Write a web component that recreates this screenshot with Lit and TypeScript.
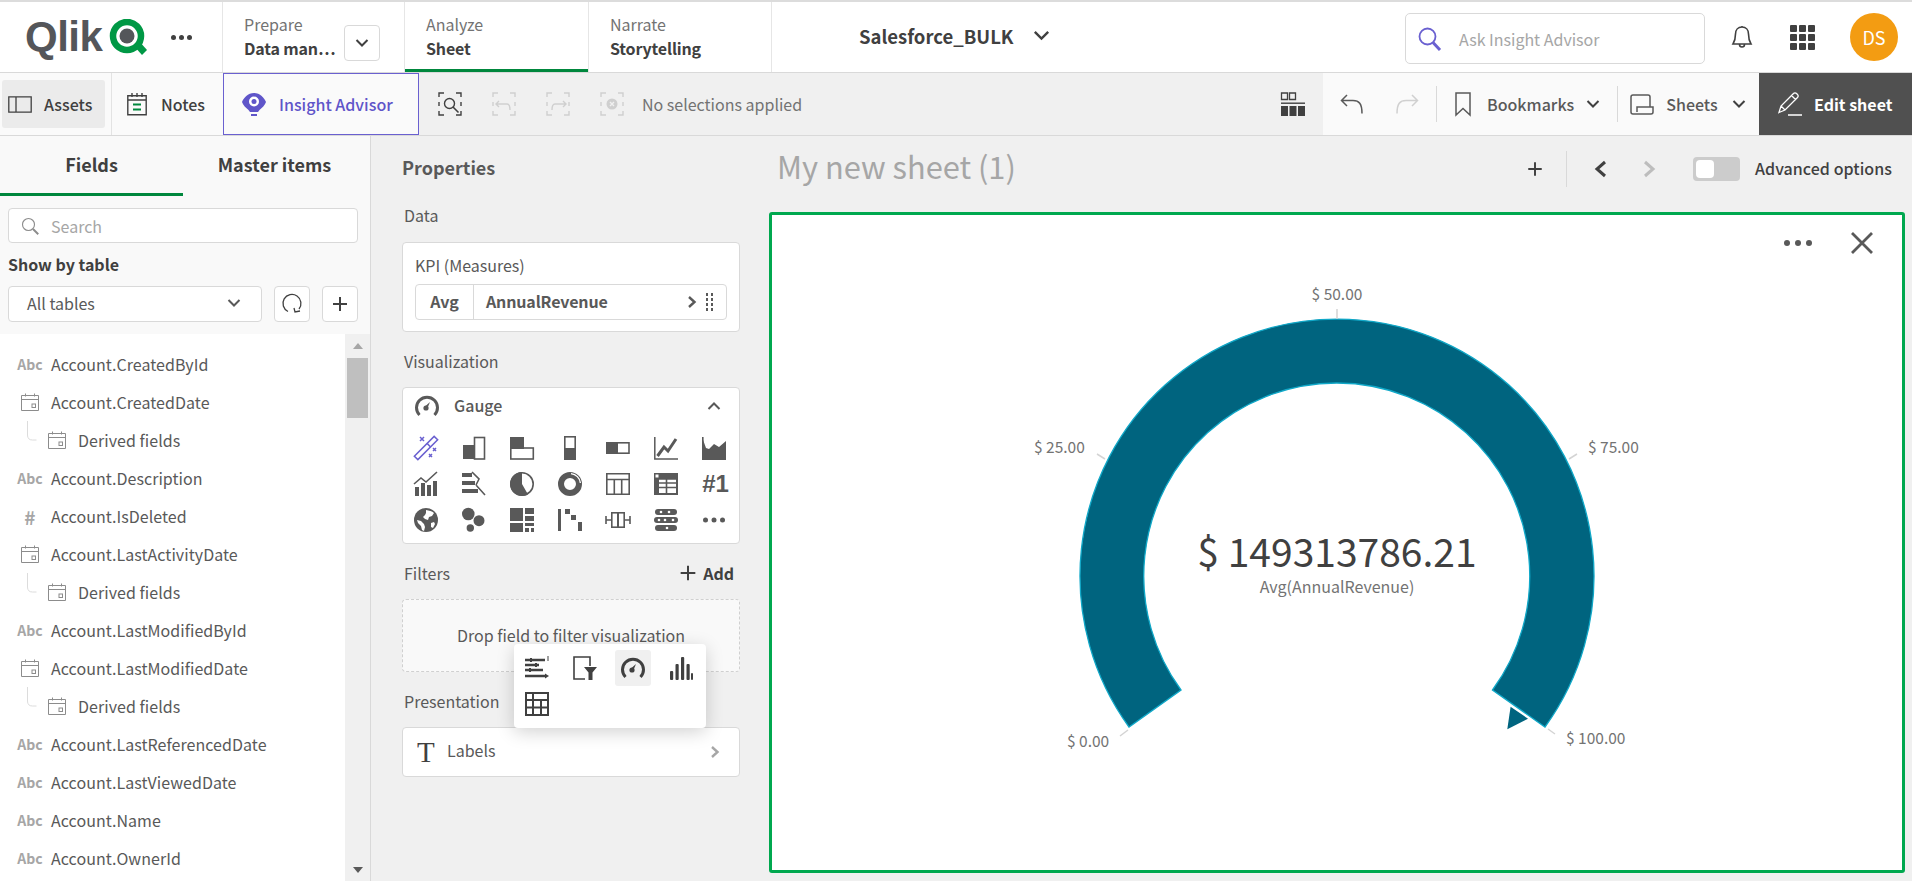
import { LitElement, html, svg, css } from "lit";
import { customElement } from "lit/decorators.js";

const box = (body: unknown, cls = "") =>
  html`<svg class="i ${cls}" viewBox="0 0 24 24" fill="currentColor">${body}</svg>`;

const chevDown = html`<svg class="chev" viewBox="0 0 14 14" fill="none" stroke="currentColor" stroke-width="2"><path d="M1.5 4l5.5 5.5L12.5 4"/></svg>`;

const calendar = html`<svg class="cal" viewBox="0 0 18 18" fill="none" stroke="currentColor" stroke-width="1"><path d="M.5 2.5h17v15H.5zM.5 6.5h17M4.5 .5v3M13.5 .5v3"/><rect x="11" y="11" width="3.5" height="3.5"/></svg>`;

const gaugeIcon = box(svg`<path d="M4.5 21A10.5 10.5 0 1 1 19.5 21" fill="none" stroke="currentColor" stroke-width="3"/><circle cx="11" cy="14" r="2.6"/><path d="M10 12.5l5-4.5 -2.5 6z"/>`);

const dashFrame = (inner: unknown) => box(svg`<path d="M1 5V1h5M18 1h5v4M23 10v4M23 19v4h-5M6 23H1v-4M1 14v-4" fill="none" stroke="currentColor" stroke-width="1.4"/>${inner}`);

const vizIcons = [
  box(svg`<g fill="none" stroke="#6a60d0" stroke-width="1.5"><g transform="rotate(-45 12 12)"><rect x="-2" y="9.5" width="28" height="5"/><path d="M16 9.5v5"/></g><path d="M6 1l4 4M10 1L6 5M19 12l3 3M22 12l-3 3M15 18l3 3M18 18l-3 3"/></g>`),
  box(svg`<rect x="1" y="9" width="12" height="14"/><rect x="12.5" y="1.5" width="10" height="21.5" fill="none" stroke="currentColor" stroke-width="1.6"/>`),
  box(svg`<rect x="0" y="1" width="14" height="12"/><rect x=".8" y="12" width="22.5" height="11" fill="none" stroke="currentColor" stroke-width="1.6"/>`),
  box(svg`<rect x="6" y="12" width="12" height="12"/><rect x="6.8" y=".8" width="10.4" height="12" fill="none" stroke="currentColor" stroke-width="1.6"/>`),
  box(svg`<rect x="0" y="6" width="12" height="12"/><rect x="11" y="6.8" width="12" height="10.4" fill="none" stroke="currentColor" stroke-width="1.6"/>`),
  box(svg`<path d="M.8 1v22H24" fill="none" stroke="currentColor" stroke-width="1.5"/><path d="M3.5 20L10 11l4 4 8-12" fill="none" stroke="currentColor" stroke-width="3"/>`),
  box(svg`<path d="M0 1v23h24V5l-7 6-5-3-5 5-3-1z"/><path d="M.8 1v22" stroke="currentColor" stroke-width="1.600"/>`),
  box(svg`<rect x="1" y="15" width="4" height="9"/><rect x="7" y="11" width="4" height="13"/><rect x="13" y="13" width="4" height="11"/><rect x="19" y="9" width="4" height="15"/><path d="M0 12l7-6 5 4 11-10" fill="none" stroke="currentColor" stroke-width="1.6"/>`),
  box(svg`<rect x="0" y="1" width="10" height="4"/><rect x="0" y="9" width="13" height="4"/><rect x="0" y="17" width="16" height="4"/><path d="M10 0l7 7-3 6M14 13l9 10" fill="none" stroke="currentColor" stroke-width="1.6"/>`),
  box(svg`<path d="M12 0v12l6 10.4A12 12 0 1 1 12 0z"/><circle cx="12" cy="12" r="11.2" fill="none" stroke="currentColor" stroke-width="1.6"/>`),
  box(svg`<circle cx="12" cy="12" r="9" fill="none" stroke="currentColor" stroke-width="6"/><path d="M13 1.6A10.5 10.5 0 0 1 22.4 11" fill="none" stroke="#fff" stroke-width="1.4"/>`),
  box(svg`<path d="M.8 1.8h22.4v20.4H.8zM.8 7.5h22.4M8.3 7.5v14.7M15.7 7.5v14.7" fill="none" stroke="currentColor" stroke-width="1.6"/>`),
  box(svg`<rect x="0" y="1" width="24" height="22"/><path d="M5 7h17v14H5z" fill="#fff"/><rect x="1.5" y="2.5" width="3" height="3" fill="#fff"/><path d="M5 11h17M5 15.500h17M12.500 7v14M5 7h17" stroke="currentColor" stroke-width="1.6"/>`),
  null,
  box(svg`<circle cx="12" cy="12" r="12"/><path d="M12 2c3 .5 6 1 8 3l-2 3-3 1-1 3-3-1-2-2 2-2 1-2zM3 12l4 1 3 3 1 3-1 4-2-1-1-4-3-3zM17 15l3-1 1 2-2 4-2-1z" fill="#fff"/>`),
  box(svg`<circle cx="6.300" cy="6" r="6.300"/><circle cx="17" cy="12.700" r="5.500"/><circle cx="8.300" cy="20" r="3.700"/>`),
  box(svg`<rect x="0" y="0" width="13" height="13"/><rect x="15" y="0" width="9" height="6"/><rect x="15" y="8" width="9" height="5"/><rect x="0" y="15" width="13" height="9"/><rect x="15" y="15" width="9" height="3"/><rect x="15" y="20" width="4" height="4"/><rect x="21" y="20" width="3" height="4"/>`),
  box(svg`<rect x="0" y="1" width="3" height="22"/><rect x="7" y="1" width="5" height="5"/><rect x="13" y="7" width="5" height="5"/><rect x="20" y="14" width="4" height="9"/>`),
  box(svg`<path d="M0 8v8M24 8v8M0 12h5M19 12h5" fill="none" stroke="currentColor" stroke-width="1.6"/><rect x="5.800" y="4.800" width="12.400" height="14.400" fill="none" stroke="currentColor" stroke-width="1.6"/><rect x="11" y="5" width="2" height="14"/>`),
  box(svg`<rect x="1" y="1" width="22" height="6" rx="3"/><rect x="0" y="9" width="24" height="6" rx="3"/><rect x="1" y="17" width="22" height="6" rx="3"/><g fill="#fff"><circle cx="7" cy="4" r="1.300"/><circle cx="15" cy="4" r="1.300"/><circle cx="5" cy="12" r="1.300"/><circle cx="11" cy="12" r="1.300"/><circle cx="19" cy="12" r="1.300"/><circle cx="13" cy="20" r="1.300"/></g>`),
  box(svg`<circle cx="3.500" cy="12" r="2.500"/><circle cx="12" cy="12" r="2.500"/><circle cx="20.500" cy="12" r="2.500"/>`),
];

const popupIcons = [
  box(svg`<g fill="none" stroke="currentColor" stroke-width="2.400"><path d="M0 4h20M0 9h14M0 14h18M0 20h20"/><path d="M6 2v4M11 7v4M5 12v4" stroke-width="2"/><path d="M23 0v5" stroke-width="1"/></g><path d="M20 17.500l4 2.500-4 2.500z"/>`),
  box(svg`<path d="M12 23H1V1h16v9" fill="none" stroke="currentColor" stroke-width="1.600"/><path d="M11 11h13l-4.500 5.500V24h-4v-7.500z"/>`),
  gaugeIcon,
  box(svg`<rect x="1" y="15" width="3.200" height="9" rx="1"/><rect x="6.500" y="8" width="3.200" height="16" rx="1"/><rect x="12" y="1" width="3.200" height="23" rx="1"/><rect x="17.500" y="8" width="3.200" height="16" rx="1"/><rect x="22" y="17" width="2" height="7" rx="1"/>`),
  box(svg`<path d="M1 1h22v22H1zM1 8h22M1 15.500h22M8 1v22M16 8v15" fill="none" stroke="currentColor" stroke-width="2"/>`),
];

type Field = { name: string; type: "abc" | "date" | "num" | "derived" };
const fields: Field[] = [
  { name: "Account.CreatedById", type: "abc" },
  { name: "Account.CreatedDate", type: "date" },
  { name: "Derived fields", type: "derived" },
  { name: "Account.Description", type: "abc" },
  { name: "Account.IsDeleted", type: "num" },
  { name: "Account.LastActivityDate", type: "date" },
  { name: "Derived fields", type: "derived" },
  { name: "Account.LastModifiedById", type: "abc" },
  { name: "Account.LastModifiedDate", type: "date" },
  { name: "Derived fields", type: "derived" },
  { name: "Account.LastReferencedDate", type: "abc" },
  { name: "Account.LastViewedDate", type: "abc" },
  { name: "Account.Name", type: "abc" },
  { name: "Account.OwnerId", type: "abc" },
];

@customElement("app-root")
export class AppRoot extends LitElement {
  static styles = css`
    :host {
      display: flex;
      flex-direction: column;
      height: 881px;
      width: 1912px;
      overflow: hidden;
      background: #f0f0f0;
      color: #404040;
      font-family: "Noto Sans CJK JP", "Noto Sans", sans-serif;
      font-size: 16px;
      border-top: 2px solid #dcdcdc;
      box-sizing: border-box;
    }
    * { box-sizing: border-box; }
    .i { width: 24px; height: 24px; display: block; flex: none; overflow: visible; }
    .chev { width: 14px; height: 14px; display: block; flex: none; }
    .cal { width: 18px; height: 18px; display: block; flex: none; color: #8c8c8c; }
    .b { font-weight: 700; }

    /* top bar */
    .header { height: 71px; background: #fff; border-bottom: 1px solid #d9d9d9; display: flex; flex: none; }
    .logo { width: 223px; border-right: 1px solid #e6e6e6; display: flex; align-items: center; padding-left: 25px; }
    .qlik { font-family: "Liberation Sans", sans-serif; font-weight: 700; font-size: 42px; letter-spacing: -.5px; color: #54565a; line-height: 1; }
    .qmark { width: 38px; height: 36px; margin-left: 7px; flex: none; }
    .more { display: flex; gap: 3px; margin-left: 24px; }
    .more span { width: 5px; height: 5px; border-radius: 50%; background: #404040; }
    .tab { width: 183px; padding: 10px 0 0 21px; border-right: 1px solid #e6e6e6; position: relative; line-height: 24px; flex: none; }
    .tab small { display: block; font-size: 16px; color: #737373; font-weight: 400; }
    .tab .b { color: #404040; font-weight: 700; letter-spacing: -.15px; }
    .tab.prep { display: flex; gap: 10px; width: 182px; }
    .tab.prep .txt { width: 90px; white-space: nowrap; }
    .ddbtn { width: 36px; height: 36px; margin-top: 13px; border: 1px solid #d9d9d9; border-radius: 4px; display: flex; align-items: center; justify-content: center; }
    .tab.on { box-shadow: inset 0 -3px 0 #00873d; }
    .appname { margin-left: 87px; display: flex; align-items: center; gap: 19px; font-size: 18.500px; font-weight: 700; padding-bottom: 3px; }
    .appname .chev { width: 17px; height: 17px; }
    .right { margin-left: auto; display: flex; align-items: center; padding: 0 14px 0 0; }
    .ask { width: 300px; height: 51px; border: 1px solid #d9d9d9; border-radius: 5px; display: flex; align-items: center; padding-left: 12px; gap: 17px; color: #a6a6a6; margin-right: 25px; margin-top: 3px; }
    .ask .i { color: #6a60d0; }
    .grid9 { display: grid; grid-template-columns: repeat(3, 7px); gap: 2px; margin: 0 35px 0 36px; }
    .grid9 span { height: 7px; background: #404040; border-radius: 1px; }
    .avatar { width: 48px; height: 48px; border-radius: 50%; background: #f39c12; color: #fff; display: flex; align-items: center; justify-content: center; font-size: 18px; }

    /* tool bar */
    .toolbar { height: 63px; flex: none; display: flex; border-bottom: 1px solid #d9d9d9; align-items: stretch; }
    .tl { background: #fafafa; display: flex; align-items: center; }
    .assets { width: 112px; border-right: 1px solid #e3e3e3; padding-left: 2px; }
    .assets .inner { width: 103px; height: 48px; background: #ebebeb; border-radius: 3px; display: flex; align-items: center; gap: 12px; padding-left: 6px; font-weight: 500; }
    .notes { width: 111px; padding-left: 13px; gap: 12px; font-weight: 500; }
    .insight { width: 196px; border: 1px solid #6a60d0; border-bottom-width: 1px; color: #5f55c9; padding-left: 18px; gap: 13px; font-weight: 500; }
    .sel { flex: 1; display: flex; align-items: center; padding-left: 19px; gap: 30px; color: #cfcfcf; }
    .sel .dark { color: #404040; }
    .sel span { color: #737373; margin-left: -12px; }
    .layout { width: 60px; display: flex; align-items: center; padding-left: 18px; }
    .tr { width: 436px; background: #fafafa; display: flex; align-items: center; padding-left: 17px; flex: none; }
    .sep { width: 1px; height: 36px; background: #d9d9d9; flex: none; }
    .tr .m { font-weight: 500; color: #595959; }
    .edit { width: 153px; background: #505050; color: #fff; display: flex; align-items: center; padding-left: 19px; gap: 12px; font-weight: 700; flex: none; }

    /* body */
    .body { flex: 1; display: flex; min-height: 0; }

    /* assets panel */
    .panel { width: 371px; flex: none; display: flex; flex-direction: column; border-right: 1px solid #d9d9d9; background: #fff; }
    .ptop { background: #f9f9f9; height: 198px; flex: none; padding: 0 12px 0 8px; }
    .ptabs { display: flex; height: 60px; margin: 0 -12px 0 -8px; font-size: 18px; font-weight: 700; color: #404040; }
    .ptabs div { width: 183px; text-align: center; padding-top: 13px; line-height: 30px; }
    .ptabs div.on { border-bottom: 3px solid #00873d; }
    .ptabs div + div { width: 187px; padding-right: 4px; }
    .psearch { height: 35px; margin-top: 12px; background: #fff; border: 1px solid #d9d9d9; border-radius: 4px; display: flex; align-items: center; padding-left: 12px; gap: 12px; color: #a6a6a6; }
    .psearch .i { width: 18px; height: 18px; color: #8c8c8c; }
    .showby { height: 43px; display: flex; align-items: center; font-weight: 700; color: #404040; padding-bottom: 2px; }
    .selrow { display: flex; gap: 12px; }
    .select, .sq { height: 36px; background: #fff; border: 1px solid #d9d9d9; border-radius: 4px; display: flex; align-items: center; }
    .select { width: 254px; padding: 0 20px 2px 18px; justify-content: space-between; color: #595959; }
    .sq { width: 36px; justify-content: center; }
    .listwrap { flex: 1; display: flex; min-height: 0; }
    .list { flex: 1; padding-top: 11px; overflow: hidden; color: #595959; letter-spacing: .05px; }
    .row { height: 38px; display: flex; align-items: center; padding-left: 18px; white-space: nowrap; }
    .ficon { width: 24px; margin-right: 9px; display: flex; justify-content: center; color: #a6a6a6; font-weight: 700; font-size: 14px; flex: none; line-height: 1; }
    .ficon.hash { font-size: 19px; }
    .row.derived { padding-left: 27px; }
    .conn { width: 21px; height: 38px; flex: none; }
    .row.derived .cal { margin-right: 12px; }
    .scroll { width: 25px; background: #f0f0f0; display: flex; flex-direction: column; align-items: center; flex: none; padding: 9px 0 8px; }
    .tri-u { width: 0; height: 0; border: 5.500px solid transparent; border-top: 0; border-bottom: 6px solid #a6a6a6; }
    .tri-d { width: 0; height: 0; border: 5.500px solid transparent; border-bottom: 0; border-top: 6px solid #595959; margin-top: auto; }
    .thumb { width: 21px; height: 60px; margin-top: 9px; background: #bfbfbf; }

    /* properties */
    .props { width: 398px; flex: none; padding: 0 29px 0 31px; position: relative; color: #595959; }
    .ptitle { height: 64px; display: flex; align-items: center; font-size: 18px; font-weight: 700; padding-bottom: 2px; }
    .lab { display: flex; align-items: center; justify-content: space-between; padding: 3px 2px 0; height: 55px; }
    .lab.first { height: 32px; padding-top: 0; padding-bottom: 2px; margin-bottom: 10px; }
    .add { display: flex; align-items: center; gap: 7px; font-weight: 700; color: #404040; padding-right: 4px; }
    .add .i { width: 16px; height: 16px; }
    .card { background: #fff; border: 1px solid #d9d9d9; border-radius: 4px; }
    .kpi { height: 90px; padding: 10px 12px 0; }
    .kpi p { margin: 0 0 7px; line-height: 24px; }
    .meas { height: 36px; border: 1px solid #d9d9d9; border-radius: 4px; display: flex; align-items: center; font-weight: 700; letter-spacing: -.15px; }
    .meas .avg { width: 58px; height: 100%; border-right: 1px solid #d9d9d9; display: flex; align-items: center; justify-content: center; padding-bottom: 2px; }
    .meas .nm { flex: 1; padding: 0 0 2px 12px; }
    .grip { display: grid; grid-template-columns: repeat(2, 2.500px); gap: 2.500px; margin: 0 13px 0 9px; }
    .grip span { height: 2.500px; background: #595959; }
    .viz { height: 157px; }
    .vizh { height: 42px; display: flex; align-items: center; padding: 0 18px 0 12px; font-weight: 500; }
    .vizh .name { margin-left: 15px; flex: 1; padding-bottom: 8px; }
    .vizh .i { margin-top: -6px; }
    .vizh .chev { margin-top: -6px; }
    .vgrid { display: grid; grid-template-columns: repeat(7, 48px); grid-auto-rows: 36px; margin-left: -1px; color: #595959; }
    .vgrid > div { display: flex; align-items: center; justify-content: center; }
    .kpiglyph { font-size: 24px; font-weight: 700; font-family: "Liberation Sans", sans-serif; margin-left: 3px; }
    .drop { height: 73px; border: 1px dashed #d0d0d0; border-radius: 4px; background: #f9f9f9; display: flex; align-items: center; justify-content: center; padding-bottom: 2px; }
    .labels { height: 50px; display: flex; align-items: center; padding: 0 17px 0 14px; }
    .tee { font-family: "Liberation Serif", serif; font-size: 29px; line-height: 1; width: 19px; margin-right: 11px; color: #404040; }
    .labels > span:nth-child(2) { padding-bottom: 5px; }
    .labels .chev { margin-left: auto; color: #a6a6a6; }
    .popup { position: absolute; left: 143px; top: 508px; width: 192px; height: 84px; background: #fff; border-radius: 4px; box-shadow: 0 4px 18px rgba(0, 0, 0, .18); padding: 6px 5px; display: grid; grid-template-columns: repeat(4, 36px); grid-auto-rows: 36px; column-gap: 12px; color: #404040; }
    .popup div { display: flex; align-items: center; justify-content: center; border-radius: 3px; }
    .popup .on { background: #f0f0f0; }

    /* sheet */
    .main { flex: 1; min-width: 0; display: flex; flex-direction: column; padding: 0 7px 8px 0; }
    .shead { height: 76px; flex: none; display: flex; align-items: center; padding: 0 13px 10px 10px; }
    .stitle { font-size: 30.800px; color: #a6a6a6; flex: 1; padding-bottom: 7px; margin-left: -2px; }
    .shead .i { width: 18px; height: 18px; }
    .shead .sep { margin: 0 27px 0 22px; }
    .toggle { width: 47px; height: 24px; background: #cccccc; border-radius: 4px; padding: 3px; margin: 0 15px 0 37px; }
    .toggle span { display: block; width: 18px; height: 18px; background: #fff; border-radius: 4px; }
    .adv { font-weight: 500; color: #404040; padding-bottom: 2px; letter-spacing: .05px; }
    .frame { flex: 1; min-height: 0; background: #fff; border: 3px solid #00a84f; border-radius: 3px; position: relative; }
    .frame svg.g { width: 100%; height: 100%; display: block; }
    .g text { font-family: "Noto Sans CJK JP", sans-serif; }
    .fact { position: absolute; top: 16px; right: 28px; display: flex; align-items: center; gap: 38px; color: #595959; }
    .fact .more { margin: 0; gap: 5px; }
    .fact .more span { background: #595959; width: 6px; height: 6px; }
    .kval { position: absolute; left: 0; right: 0; top: 315px; text-align: center; display: flex; flex-direction: column; gap: 6px; pointer-events: none; }
    .kval .v { font-size: 39px; line-height: 40px; color: #404040; }
    .kval .s { line-height: 20px; color: #737373; }
  `;

  private renderField(f: Field) {
    if (f.type === "derived") {
      return html`<div class="row derived">
        <svg class="conn" viewBox="0 0 21 38" fill="none" stroke="#dcdcdc"><path d="M.5 0v14q0 5 5 5h4"/></svg>
        ${calendar}<span>${f.name}</span>
      </div>`;
    }
    const icon =
      f.type === "abc" ? html`<div class="ficon">Abc</div>`
      : f.type === "num" ? html`<div class="ficon hash">#</div>`
      : html`<div class="ficon">${calendar}</div>`;
    return html`<div class="row">${icon}<span>${f.name}</span></div>`;
  }

  render() {
    return html`
      <div class="header">
        <div class="logo">
          <span class="qlik">Qlik</span>
          <svg class="qmark" viewBox="0 0 38 36"><circle cx="18" cy="17" r="14" fill="none" stroke="#009845" stroke-width="6.500"/><circle cx="18" cy="17" r="7.500" fill="#54565a"/><path d="M25 27l5-5 8 9-5 5z" fill="#009845"/></svg>
          <div class="more"><span></span><span></span><span></span></div>
        </div>
        <div class="tab prep">
          <div class="txt"><small>Prepare</small><div class="b">Data man…</div></div>
          <div class="ddbtn">${chevDown}</div>
        </div>
        <div class="tab on" style="width:184px"><small>Analyze</small><div class="b">Sheet</div></div>
        <div class="tab"><small>Narrate</small><div class="b">Storytelling</div></div>
        <div class="appname"><span>Salesforce_BULK</span>${chevDown}</div>
        <div class="right">
          <div class="ask">
            ${box(svg`<circle cx="9.500" cy="9.500" r="8" fill="none" stroke="currentColor" stroke-width="1.800"/><path d="M15 15.500l7 7.500" stroke="currentColor" stroke-width="3" fill="none"/>`)}
            <span>Ask Insight Advisor</span>
          </div>
          ${box(svg`<path d="M12 2c-4 0-6.500 3-6.500 7 0 5-1 7.500-2.500 10h18c-1.500-2.500-2.500-5-2.500-10 0-4-2.500-7-6.500-7zM12 1v1M9.500 19.500a2.500 2.500 0 0 0 5 0" fill="none" stroke="currentColor" stroke-width="1.600"/>`)}
          <div class="grid9">${[...Array(9)].map(() => html`<span></span>`)}</div>
          <div class="avatar">DS</div>
        </div>
      </div>

      <div class="toolbar">
        <div class="tl assets">
          <div class="inner">
            ${box(svg`<path d="M.8 4.800h22.400v15.400H.8zM8 4.800v15.400" fill="none" stroke="currentColor" stroke-width="1.300"/>`)}
            <span>Assets</span>
          </div>
        </div>
        <div class="tl notes">
          ${box(svg`<path d="M2.800 3.800h18.400v19H2.800zM2.800 8h18.400M7 1v4M12 1v4M17 1v4" fill="none" stroke="currentColor" stroke-width="1.400"/><path d="M8 12.500h8M8 17.500h8" stroke="#00873d" stroke-width="1.800"/>`)}
          <span>Notes</span>
        </div>
        <div class="tl insight">
          ${box(svg`<path d="M12 1C6 1 1.500 6 0 10c1 3 4 6 6.500 8L8 20h8l1.500-2C20 16 23 13 24 10 22.500 6 18 1 12 1z"/><circle cx="12" cy="9.500" r="5" fill="#fff"/><circle cx="12" cy="9.500" r="2.500"/><rect x="9" y="22" width="6" height="2"/>`)}
          <span>Insight Advisor</span>
        </div>
        <div class="sel">
          <div class="dark">${dashFrame(svg`<circle cx="11.500" cy="11.500" r="5" fill="none" stroke="currentColor" stroke-width="1.400"/><path d="M15 15l5.500 5.500" stroke="currentColor" stroke-width="1.600"/>`)}</div>
          ${dashFrame(svg`<path d="M7 9l-3 3 3 3M4.500 12H15c2 0 3 1.500 3 6" fill="none" stroke="currentColor" stroke-width="1.400"/>`)}
          ${dashFrame(svg`<path d="M17 9l3 3-3 3M19.500 12H9c-2 0-3 1.500-3 6" fill="none" stroke="currentColor" stroke-width="1.400"/>`)}
          ${dashFrame(svg`<circle cx="12" cy="12" r="5.500"/><path d="M10 10l4 4M14 10l-4 4" stroke="#f0f0f0" stroke-width="1.400"/>`)}
          <span>No selections applied</span>
        </div>
        <div class="layout">
          ${box(svg`<path d="M.5 1h6v6.500h-6zM8.500 1h6v6.500h-6z" fill="none" stroke="currentColor" stroke-width="1.300"/><rect x="0" y="10.500" width="24" height="1.400"/><rect x="0" y="14" width="7" height="10"/><rect x="8.500" y="14" width="7" height="10"/><rect x="17" y="14" width="7" height="10"/>`)}
        </div>
        <div class="tr">
          ${box(svg`<path d="M7 3L1.500 8.500 7 14M1.500 8.500H13c6 0 9 3 9 13" fill="none" stroke="#595959" stroke-width="1.500"/>`)}
          <div style="width:31px"></div>
          ${box(svg`<path d="M17 3l5.500 5.500L17 14M22.500 8.500H11c-6 0-9 3-9 13" fill="none" stroke="#d0d0d0" stroke-width="1.500"/>`)}
          <div class="sep" style="margin:0 14px 0 17px"></div>
          ${box(svg`<path d="M5 1h14v22l-7-6.500L5 23z" fill="none" stroke="#595959" stroke-width="1.500"/>`)}
          <span class="m" style="margin:0 12px 0 12px">Bookmarks</span>
          ${chevDown}
          <div class="sep" style="margin:0 12px 0 17px"></div>
          ${box(svg`<path d="M20 15V5a2 2 0 0 0-2-2H3a2 2 0 0 0-2 2v15a2 2 0 0 0 2 2h18a2 2 0 0 0 2-2v-5H7v5" fill="none" stroke="#595959" stroke-width="1.500"/>`)}
          <span class="m" style="margin:0 14px 0 12px">Sheets</span>
          ${chevDown}
        </div>
        <div class="edit">
          ${box(svg`<path d="M1 20.500L3 14 15.500 1.500a2 2 0 0 1 3 0l1 1a2 2 0 0 1 0 3L7 18zM3 14l4 4M13.500 3.500l4.500 4.500M10 23h14" fill="none" stroke="currentColor" stroke-width="1.300"/>`)}
          <span>Edit sheet</span>
        </div>
      </div>

      <div class="body">
        <div class="panel">
          <div class="ptop">
            <div class="ptabs"><div class="on">Fields</div><div>Master items</div></div>
            <div class="psearch">
              ${box(svg`<circle cx="10" cy="10" r="8" fill="none" stroke="currentColor" stroke-width="1.500"/><path d="M16 16l7 7" stroke="currentColor" stroke-width="2.500"/>`)}
              <span>Search</span>
            </div>
            <div class="showby">Show by table</div>
            <div class="selrow">
              <div class="select"><span>All tables</span>${chevDown}</div>
              <div class="sq">${box(svg`<path d="M8 20.500A9 9 0 1 1 19 18M14 17l1 4 5-1" fill="none" stroke="currentColor" stroke-width="1.300" transform="translate(0 -1)"/>`)}</div>
              <div class="sq">${box(svg`<path d="M12 5v14M5 12h14" stroke="currentColor" stroke-width="2"/>`)}</div>
            </div>
          </div>
          <div class="listwrap">
            <div class="list">${fields.map((f) => this.renderField(f))}</div>
            <div class="scroll"><div class="tri-u"></div><div class="thumb"></div><div class="tri-d"></div></div>
          </div>
        </div>

        <div class="props">
          <div class="ptitle">Properties</div>
          <div class="lab first">Data</div>
          <div class="card kpi">
            <p>KPI (Measures)</p>
            <div class="meas">
              <div class="avg">Avg</div>
              <div class="nm">AnnualRevenue</div>
              <svg class="chev" style="width:10px" viewBox="0 0 10 14" fill="none" stroke="currentColor" stroke-width="2.400"><path d="M2 2l5.500 5L2 12"/></svg>
              <div class="grip">${[...Array(8)].map(() => html`<span></span>`)}</div>
            </div>
          </div>
          <div class="lab">Visualization</div>
          <div class="card viz">
            <div class="vizh">${gaugeIcon}<span class="name">Gauge</span><svg class="chev" viewBox="0 0 14 14" fill="none" stroke="currentColor" stroke-width="2"><path d="M1.500 10L7 4.500 12.500 10"/></svg></div>
            <div class="vgrid">
              ${vizIcons.map((ic) => html`<div>${ic ?? html`<span class="kpiglyph">#1</span>`}</div>`)}
            </div>
          </div>
          <div class="lab"><span>Filters</span><span class="add">${box(svg`<path d="M12 1v22M1 12h22" stroke="currentColor" stroke-width="3"/>`)}Add</span></div>
          <div class="drop">Drop field to filter visualization</div>
          <div class="lab">Presentation</div>
          <div class="card labels"><span class="tee">T</span><span>Labels</span><svg class="chev" viewBox="0 0 14 14" fill="none" stroke="currentColor" stroke-width="2.400"><path d="M4 2l5.500 5L4 12"/></svg></div>
          <div class="popup">
            ${popupIcons.map((ic, n) => html`<div class=${n === 2 ? "on" : ""}>${ic}</div>`)}
          </div>
        </div>

        <div class="main">
          <div class="shead">
            <div class="stitle">My new sheet (1)</div>
            ${box(svg`<path d="M12 3v18M3 12h18" stroke="currentColor" stroke-width="2.600"/>`)}
            <div class="sep"></div>
            <svg class="chev" viewBox="0 0 14 18" style="width:14px;height:18px" fill="none" stroke="currentColor" stroke-width="3"><path d="M11 2L3 9l8 7"/></svg>
            <svg class="chev" viewBox="0 0 14 18" style="width:14px;height:18px;margin-left:34px;color:#bdbdbd" fill="none" stroke="currentColor" stroke-width="3"><path d="M3 2l8 7-8 7"/></svg>
            <div class="toggle"><span></span></div>
            <span class="adv">Advanced options</span>
          </div>
          <div class="frame">
            <svg class="g" viewBox="772 215 1130 655">
              <path d="M1129 727A257 257 0 1 1 1545 727L1492.500 690A193 193 0 1 0 1181 690Z" fill="#00647f" stroke="#10a8c8" stroke-width="1.300"/>
              <g stroke="#d4d4d4" stroke-width="1.500">
                <path d="M1337 309v10M1097 454l8 5M1577 454l-8 5M1120 736l8-6M1555 734l-7-5"/>
              </g>
              <path d="M1510.600 706.700L1528 718.700 1507.300 729.300Z" fill="#00647f"/>
              <g fill="#737373" font-size="15.500">
                <text x="1337" y="300" text-anchor="middle">$ 50.00</text>
                <text x="1034" y="453">$ 25.00</text>
                <text x="1588" y="453">$ 75.00</text>
                <text x="1067" y="747">$ 0.00</text>
                <text x="1566" y="744">$ 100.00</text>
              </g>
            </svg>
            <div class="kval"><div class="v">$ 149313786.21</div><div class="s">Avg(AnnualRevenue)</div></div>
            <div class="fact">
              <div class="more"><span></span><span></span><span></span></div>
              ${box(svg`<path d="M2 2l20 20M22 2L2 22" stroke="currentColor" stroke-width="2.800"/>`)}
            </div>
          </div>
        </div>
      </div>
    `;
  }
}
